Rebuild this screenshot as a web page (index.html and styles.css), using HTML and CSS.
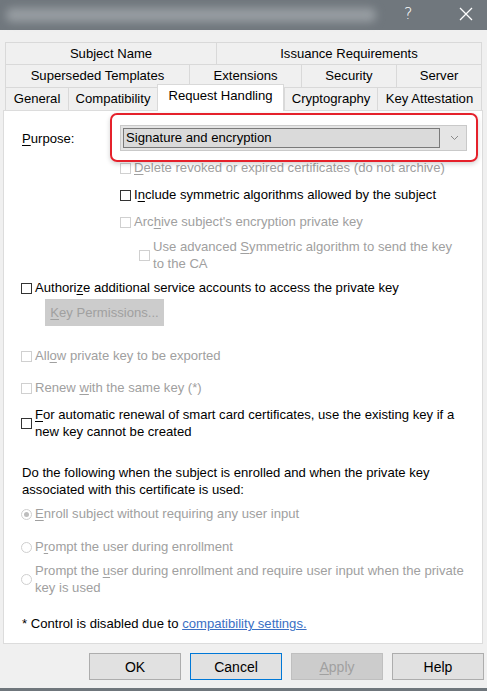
FILE: index.html
```html
<!DOCTYPE html>
<html lang="en">
<head>
  <meta charset="UTF-8">
  <title>Template Properties</title>
  <link rel="stylesheet" href="styles.css">
</head>
<body>

  <div class="titlebar">
    <div class="title-blur"></div>
    <span class="help-btn">?</span>
    <span class="close-btn">
      <svg width="14" height="14" viewBox="0 0 14 14"><path d="M1 1L13 13M13 1L1 13" stroke="#fff" stroke-width="1.3" fill="none"/></svg>
    </span>
  </div>

  <div class="tabs">
    <div class="tab-row">
      <div class="tab" style="width:211px">Subject Name</div>
      <div class="tab" style="width:266px">Issuance Requirements</div>
    </div>
    <div class="tab-row">
      <div class="tab" style="width:184px">Superseded Templates</div>
      <div class="tab" style="width:112px">Extensions</div>
      <div class="tab" style="width:95px">Security</div>
      <div class="tab" style="width:86px">Server</div>
    </div>
    <div class="tab-row">
      <div class="tab" style="width:63px">General</div>
      <div class="tab" style="width:89px">Compatibility</div>
      <div class="tab active" style="width:127px">Request Handling</div>
      <div class="tab" style="width:93px">Cryptography</div>
      <div class="tab" style="width:105px">Key Attestation</div>
    </div>
  </div>

  <div class="panel">
    <div class="purpose-row">
      <span class="label"><u>P</u>urpose:</span>
      <div class="select">
        <span class="select-value">Signature and encryption</span>
        <svg class="chevron" width="9" height="6" viewBox="0 0 9 6"><path d="M1 1L4.5 4.5L8 1" stroke="#8a8a8a" fill="none"/></svg>
        <div class="highlight"></div>
      </div>
    </div>

    <div class="check disabled indent-1 m8"><span class="box"></span><span><u>D</u>elete revoked or expired certificates (do not archive)</span></div>
    <div class="check indent-1 m10"><span class="box"></span><span>I<u>n</u>clude symmetric algorithms allowed by the subject</span></div>
    <div class="check disabled indent-1 m10"><span class="box"></span><span>Arc<u>h</u>ive subject's encryption private key</span></div>
    <div class="check disabled indent-2 m8"><span class="box"></span><span>Use advanced <u>S</u>ymmetric algorithm to send the key<br>to the CA</span></div>

    <div class="check m7"><span class="box"></span><span>Authori<u>z</u>e additional service accounts to access the private key</span></div>
    <button class="perm-btn" disabled><u>K</u>ey Permissions...</button>

    <div class="check disabled m21"><span class="box"></span><span>All<u>o</u>w private key to be exported</span></div>
    <div class="check disabled m15"><span class="box"></span><span>Renew <u>w</u>ith the same key (*)</span></div>
    <div class="check m10"><span class="box"></span><span><u>F</u>or automatic renewal of smart card certificates, use the existing key if a<br>new key cannot be created</span></div>

    <p class="note m24">Do the following when the subject is enrolled and when the private key<br>associated with this certificate is used:</p>

    <div class="radio disabled checked m7"><span class="dot"></span><span><u>E</u>nroll subject without requiring any user input</span></div>
    <div class="radio disabled m16"><span class="dot"></span><span>P<u>r</u>ompt the user during enrollment</span></div>
    <div class="radio disabled m7"><span class="dot"></span><span>Prompt the <u>u</u>ser during enrollment and require user input when the private<br>key is used</span></div>

    <p class="note m19">* Control is disabled due to <a href="#">compatibility settings.</a></p>
  </div>

  <div class="buttons">
    <button class="btn">OK</button>
    <button class="btn focused">Cancel</button>
    <button class="btn" disabled><u>A</u>pply</button>
    <button class="btn">Help</button>
  </div>

  <div class="bottom-edge"></div>

</body>
</html>
```

FILE: styles.css
```css
body {
  font-family: "Liberation Sans", Arial, sans-serif;
  font-size: 13.1px;
  background: #f0f0f0;
  color: #000;
  margin: 0;
  padding: 0;
  width: 487px;
  height: 691px;
  overflow: hidden;
}

u {
  text-decoration: underline;
  text-underline-offset: 2px;
}

/* title bar */

.titlebar {
  height: 30px;
  background: #70777d;
  display: flex;
  align-items: center;
  position: relative;
}

.title-blur {
  width: 370px;
  height: 14px;
  margin-left: 6px;
  background: #979da2;
  border-radius: 6px;
  filter: blur(4px);
}

.help-btn {
  color: #fff;
  font-family: "DejaVu Sans", sans-serif;
  font-weight: 200;
  font-size: 16px;
  margin-left: 28px;
  margin-top: -4px;
}

.close-btn {
  margin-left: 46px;
  display: flex;
  margin-top: -2px;
}

/* tabs */

.tabs {
  margin: 12px 0 0 5px;
  width: 477px;
}

.tab-row {
  display: flex;
  height: 23px;
}

.tab-row:first-child {
  height: 22px;
}

.tab {
  box-sizing: border-box;
  border-top: 1px solid #d9d9d9;
  border-left: 1px solid #d9d9d9;
  text-align: center;
  line-height: 21px;
  white-space: nowrap;
}

.tab:last-child {
  border-right: 1px solid #d9d9d9;
}

.tab.active {
  background: #fff;
  margin-top: -3px;
  height: 27px;
  line-height: 21px;
  position: relative;
  z-index: 2;
  border-right: 1px solid #d9d9d9;
}

/* panel */

.panel {
  margin-left: 3px;
  width: 480px;
  box-sizing: border-box;
  background: #fff;
  border: 1px solid #dcdcdc;
  padding: 0 0 11px 17px;
  position: relative;
  z-index: 1;
}

.purpose-row {
  display: flex;
  align-items: center;
  padding-top: 14px;
}

.label {
  width: 98px;
  padding-left: 1px;
}

.select {
  position: relative;
  width: 347px;
  height: 26px;
  box-sizing: border-box;
  background: #e5e5e5;
  border: 1px solid #c9c9c9;
  display: flex;
  align-items: center;
}

.select-value {
  margin-left: 2px;
  width: 317px;
  height: 20px;
  box-sizing: border-box;
  line-height: 18px;
  padding-left: 2px;
  background: #dadada;
  border: 1px solid #7a7a7a;
}

.chevron {
  margin-left: 10px;
}

.highlight {
  position: absolute;
  left: -11px;
  top: -13px;
  right: -12px;
  bottom: -12px;
  border: 2px solid #e5212b;
  border-radius: 7px;
  box-shadow: 0 2px 5px rgba(0, 0, 0, 0.18);
}

.check, .radio {
  display: flex;
  align-items: center;
  line-height: 17px;
}

.check .box {
  flex: none;
  width: 11px;
  height: 11px;
  box-sizing: border-box;
  border: 1px solid #333;
  margin-right: 3px;
  margin-top: 1px;
}

.radio .dot {
  flex: none;
  width: 11px;
  height: 11px;
  box-sizing: border-box;
  border: 1px solid #cfcfcf;
  border-radius: 50%;
  margin-right: 3px;
  margin-top: 1px;
  display: flex;
  align-items: center;
  justify-content: center;
}

.radio.checked .dot::after {
  content: "";
  width: 5px;
  height: 5px;
  border-radius: 50%;
  background: #bdbdbd;
}

.disabled {
  color: #a0a0a0;
}

.check.disabled .box {
  border-color: #d0d0d0;
}

.indent-1 { margin-left: 99px; }
.indent-2 { margin-left: 118px; }

.m7 { margin-top: 7px; }
.m8 { margin-top: 8px; }
.m10 { margin-top: 10px; }
.m15 { margin-top: 15px; }
.m16 { margin-top: 16px; }
.m19 { margin-top: 19px; }
.m21 { margin-top: 21px; }
.m24 { margin-top: 24px; }

.perm-btn {
  display: block;
  margin: 3px 0 0 24px;
  width: 119px;
  height: 27px;
  font: inherit;
  color: #a0a0a0;
  background: #cccccc;
  border: 1px solid #cccccc;
  padding: 0;
}

.note {
  line-height: 17px;
  margin-bottom: 0;
  margin-left: 1px;
}

.note a {
  color: #3a6fc4;
  text-decoration: underline;
}

/* buttons */

.buttons {
  display: flex;
  justify-content: flex-end;
  gap: 9px;
  padding: 9px 3px 0 0;
}

.btn {
  width: 92px;
  height: 27px;
  font: inherit;
  font-size: 14px;
  background: #e1e1e1;
  border: 1px solid #adadad;
  color: #000;
  padding: 0;
}

.btn.focused {
  border-color: #0078d7;
}

.btn:disabled {
  background: #cccccc;
  border-color: #bfbfbf;
  color: #a0a0a0;
}

.bottom-edge {
  position: absolute;
  left: 0;
  right: 0;
  bottom: 0;
  height: 3px;
  background: #6f767c;
}
```
